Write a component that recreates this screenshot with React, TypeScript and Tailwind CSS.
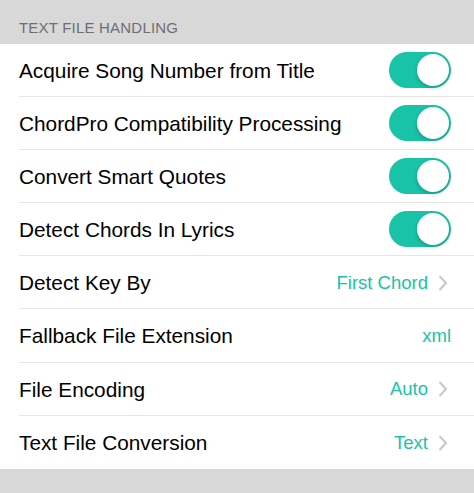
import { useState } from "react";

type Row =
  | { label: string; kind: "toggle" }
  | { label: string; kind: "value"; value: string; chevron: boolean };

const rows: Row[] = [
  { label: "Acquire Song Number from Title", kind: "toggle" },
  { label: "ChordPro Compatibility Processing", kind: "toggle" },
  { label: "Convert Smart Quotes", kind: "toggle" },
  { label: "Detect Chords In Lyrics", kind: "toggle" },
  { label: "Detect Key By", kind: "value", value: "First Chord", chevron: true },
  { label: "Fallback File Extension", kind: "value", value: "xml", chevron: false },
  { label: "File Encoding", kind: "value", value: "Auto", chevron: true },
  { label: "Text File Conversion", kind: "value", value: "Text", chevron: true },
];

function Toggle({ on, onChange }: { on: boolean; onChange: () => void }) {
  return (
    <button
      onClick={onChange}
      className={`relative w-[62px] h-[36px] rounded-full shrink-0 ${on ? "bg-[#18c3a7]" : "bg-[#e5e5ea]"}`}
    >
      <span
        className={`absolute top-[2px] w-[32px] h-[32px] rounded-full bg-white shadow-[0_2px_4px_rgba(0,0,0,0.2)] ${on ? "left-[28px]" : "left-[2px]"}`}
      />
    </button>
  );
}

function Chevron() {
  return (
    <svg width="10" height="16" viewBox="0 0 10 16" className="ml-[10px] mr-[3px]">
      <path d="M2 1.5 L8 8 L2 14.5" fill="none" stroke="#c7c7cc" strokeWidth="2" strokeLinecap="round" strokeLinejoin="round" />
    </svg>
  );
}

export default function App() {
  const [toggles, setToggles] = useState([true, true, true, true]);

  return (
    <div className="w-[474px] h-[493px] bg-[#d8d8d8] font-['Liberation_Sans',Arial,sans-serif] flex flex-col overflow-hidden">
      <div className="h-[44px] flex items-end pb-[5px] px-[19px] text-[15px] text-[#6e6e73] tracking-[0.2px]">
        TEXT FILE HANDLING
      </div>
      <div className="bg-white">
        {rows.map((row, i) => (
          <div key={row.label} className="pl-[19px]">
            <div
              className={`h-[53.1px] flex items-center pr-[23px] ${i < rows.length - 1 ? "border-b border-[#e6e6e6]" : ""}`}
            >
              <span className="flex-1 text-[20.8px] text-black pt-[1px]">{row.label}</span>
              {row.kind === "toggle" ? (
                <Toggle
                  on={toggles[i]}
                  onChange={() => setToggles((t) => t.map((v, j) => (j === i ? !v : v)))}
                />
              ) : (
                <div className="flex items-center pt-[1px]">
                  <span className="text-[18.5px] text-[#18c3a7]">{row.value}</span>
                  {row.chevron && <Chevron />}
                </div>
              )}
            </div>
          </div>
        ))}
      </div>
    </div>
  );
}
